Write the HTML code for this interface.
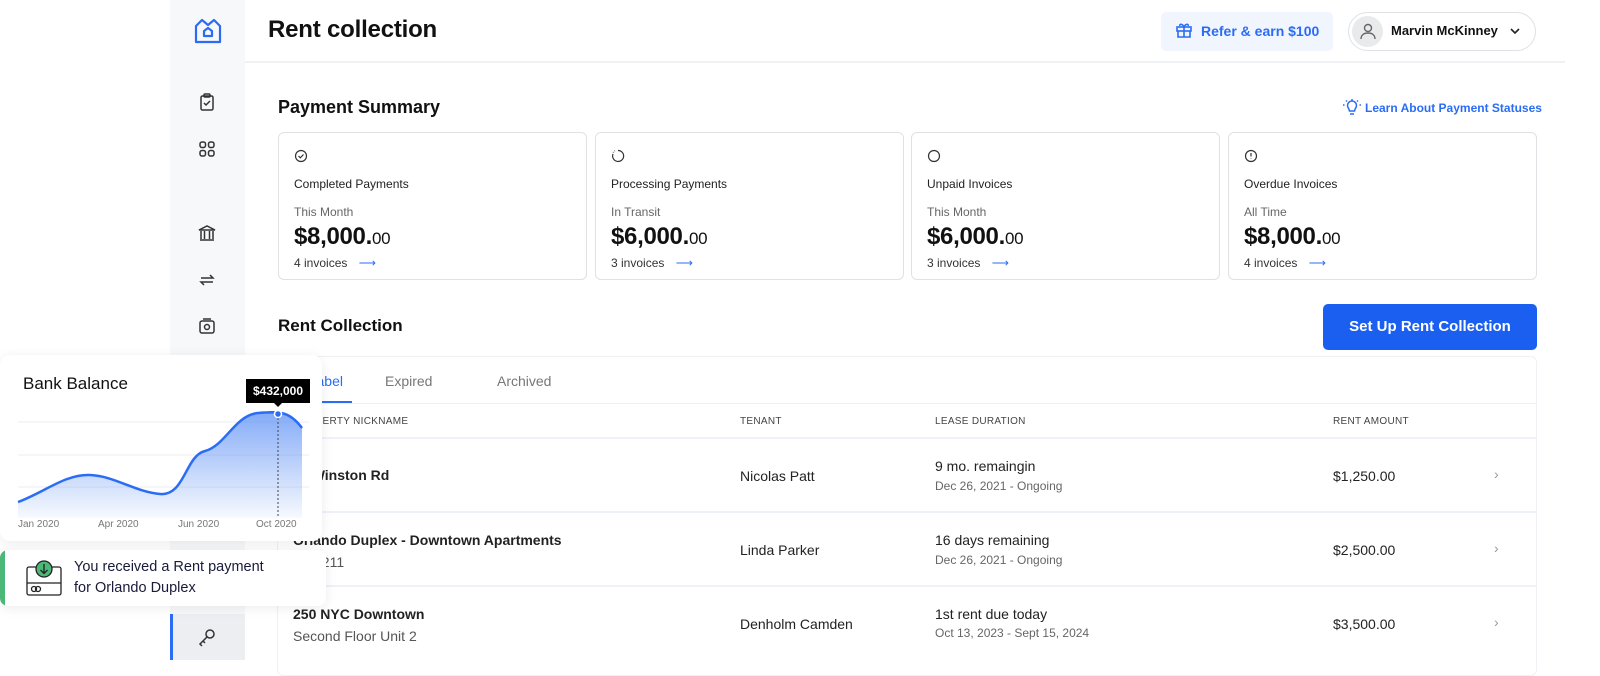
<!DOCTYPE html>
<html><head><meta charset="utf-8"><style>
*{box-sizing:border-box;margin:0;padding:0}
body{width:1600px;height:660px;overflow:hidden;background:#fff;font-family:"Liberation Sans",sans-serif;color:#111;position:relative}
.abs{position:absolute}
.side{left:170px;top:0;width:75px;height:660px;background:#f7f8fa}
.ic{position:absolute;left:197px}
.card{position:absolute;top:132px;width:309px;height:148px;border:1px solid #dfe1e5;border-radius:6px;padding:16px 15px}
.card .t{font-size:12px;color:#222;margin-top:9px}
.card .s{font-size:12px;color:#666;margin-top:14px}
.card .a{font-size:24px;font-weight:bold;margin-top:4px;letter-spacing:-0.3px}
.card .a small{font-size:17px;font-weight:normal}
.card .i{font-size:12px;color:#333;margin-top:5px}
.card .i b{color:#2a6df4;font-weight:normal;margin-left:8px}
.th{position:absolute;top:416px;font-size:10px;color:#444;letter-spacing:.3px}
.row{position:absolute;left:277px;width:1260px;height:74px;border-top:2px solid #eef1f8}
.c{position:absolute;font-size:14px;color:#222}
.sub{position:absolute;font-size:12px;color:#666}
</style></head><body>
<div class="abs side"></div>
<svg class="abs" style="left:194px;top:18px" width="28" height="26" viewBox="0 0 28 26" fill="none" stroke="#2a6df4" stroke-width="2.2" stroke-linejoin="round"><path d="M2 24V8l6-6 6 5 6-5 6 6v16z"/><path d="M10 18v-5l4-3 4 3v5z"/></svg>
<svg class="ic" style="top:92px" width="20" height="20" viewBox="0 0 20 20" fill="none" stroke="#333" stroke-width="1.5"><rect x="4" y="4" width="12" height="14" rx="1.5"/><rect x="7" y="2" width="6" height="3" rx="1"/><path d="M7 11l2 2 4-4"/></svg>
<svg class="ic" style="top:139px" width="20" height="20" viewBox="0 0 20 20" fill="none" stroke="#333" stroke-width="1.5"><rect x="3" y="3" width="5.5" height="5.5" rx="2"/><rect x="11.5" y="3" width="5.5" height="5.5" rx="2"/><rect x="3" y="11.5" width="5.5" height="5.5" rx="2"/><rect x="11.5" y="11.5" width="5.5" height="5.5" rx="2"/></svg>
<svg class="ic" style="top:223px" width="20" height="20" viewBox="0 0 20 20" fill="none" stroke="#333" stroke-width="1.5"><path d="M2 7l8-4 8 4zM3 17h14M4 8v8M7.5 8v8M12.5 8v8M16 8v8"/></svg>
<svg class="ic" style="top:270px" width="20" height="20" viewBox="0 0 20 20" fill="none" stroke="#333" stroke-width="1.5"><path d="M4 8h12l-3-3M16 12H4l3 3"/></svg>
<svg class="ic" style="top:316px" width="20" height="20" viewBox="0 0 20 20" fill="none" stroke="#333" stroke-width="1.5"><rect x="3" y="5" width="14" height="12" rx="2"/><path d="M6 3h8"/><circle cx="10" cy="11" r="2.5"/></svg>
<div class="abs" style="left:170px;top:614px;width:75px;height:46px;background:#eceef2"></div>
<div class="abs" style="left:170px;top:614px;width:3px;height:46px;background:#2a6df4"></div>
<svg class="ic" style="top:627px" width="20" height="20" viewBox="0 0 20 20" fill="none" stroke="#333" stroke-width="1.5"><circle cx="13" cy="7" r="4"/><path d="M10 10l-7 7 2 2M6 14l2 2"/></svg>

<div class="abs" style="left:268px;top:16px;font-size:24px;font-weight:bold;color:#111;letter-spacing:-0.2px">Rent collection</div>
<div class="abs" style="left:245px;top:61px;width:1320px;height:2px;background:#f0f1f3"></div>
<div class="abs" style="left:1161px;top:12px;width:172px;height:39px;background:#f1f5fd;border-radius:5px;color:#2a6df4;font-size:14px;font-weight:bold;line-height:39px;padding-left:40px">Refer &amp; earn $100</div>
<svg class="abs" style="left:1175px;top:21px" width="18" height="18" viewBox="0 0 18 18" fill="none" stroke="#2a6df4" stroke-width="1.6"><rect x="2" y="6" width="14" height="4"/><path d="M3 10v6h12v-6M9 6v10M9 6C7 2 4 3 5 5M9 6c2-4 5-3 4-1"/></svg>
<div class="abs" style="left:1348px;top:12px;width:188px;height:39px;border:1px solid #dfe1e5;border-radius:20px"></div>
<div class="abs" style="left:1352px;top:16px;width:31px;height:31px;border-radius:50%;background:#e9eaec"></div>
<svg class="abs" style="left:1358px;top:21px" width="20" height="20" viewBox="0 0 20 20" fill="none" stroke="#666" stroke-width="1.4"><circle cx="10" cy="7" r="3.5"/><path d="M3 18c0-4 3-6 7-6s7 2 7 6"/></svg>
<div class="abs" style="left:1391px;top:23px;font-size:13px;font-weight:bold;color:#111">Marvin McKinney</div>
<svg class="abs" style="left:1509px;top:27px" width="12" height="8" viewBox="0 0 12 8" fill="none" stroke="#222" stroke-width="1.6"><path d="M2 2l4 4 4-4"/></svg>

<div class="abs" style="left:278px;top:97px;font-size:18px;font-weight:bold">Payment Summary</div>
<svg class="abs" style="left:1343px;top:99px" width="18" height="18" viewBox="0 0 18 18" fill="none" stroke="#2a6df4" stroke-width="1.5"><path d="M6.5 12c0-2-2-3-2-5.5a4.5 4.5 0 019 0c0 2.5-2 3.5-2 5.5zM7 15h4M9 0v1.5M1.5 6H0M18 6h-1.5M3 1.5l1 1M15 1.5l-1 1"/></svg>
<div class="abs" style="left:1365px;top:101px;font-size:12px;font-weight:bold;color:#2a6df4">Learn About Payment Statuses</div>

<div class="card" style="left:278px"><svg width="14" height="14" viewBox="0 0 14 14" fill="none" stroke="#333" stroke-width="1.2"><circle cx="7" cy="7" r="5.5"/><path d="M4.5 7l1.8 1.8 3.2-3.3"/></svg><div class="t">Completed Payments</div><div class="s">This Month</div><div class="a">$8,000.<small>00</small></div><div class="i">4 invoices <b>⟶</b></div></div>
<div class="card" style="left:595px"><svg width="14" height="14" viewBox="0 0 14 14" fill="none" stroke="#333" stroke-width="1.2"><path d="M7 1.5a5.5 5.5 0 11-5 3.5" /><path d="M2 3.5l.5-.5M3.5 2l.5-.3" stroke-dasharray="1 1"/></svg><div class="t">Processing Payments</div><div class="s">In Transit</div><div class="a">$6,000.<small>00</small></div><div class="i">3 invoices <b>⟶</b></div></div>
<div class="card" style="left:911px"><svg width="14" height="14" viewBox="0 0 14 14" fill="none" stroke="#333" stroke-width="1.2"><circle cx="7" cy="7" r="5.5"/></svg><div class="t">Unpaid Invoices</div><div class="s">This Month</div><div class="a">$6,000.<small>00</small></div><div class="i">3 invoices <b>⟶</b></div></div>
<div class="card" style="left:1228px"><svg width="14" height="14" viewBox="0 0 14 14" fill="none" stroke="#333" stroke-width="1.2"><circle cx="7" cy="7" r="5.5"/><path d="M7 4v3.5M7 9.5v.5"/></svg><div class="t">Overdue Invoices</div><div class="s">All Time</div><div class="a">$8,000.<small>00</small></div><div class="i">4 invoices <b>⟶</b></div></div>

<div class="abs" style="left:278px;top:316px;font-size:17px;font-weight:bold">Rent Collection</div>
<div class="abs" style="left:1323px;top:304px;width:214px;height:46px;background:#1b5ff0;border-radius:5px;color:#fff;font-size:15px;font-weight:bold;text-align:center;line-height:46px">Set Up Rent Collection</div>

<div class="abs" style="left:277px;top:356px;width:1260px;height:320px;border:1px solid #f0f1f4;border-radius:6px"></div>
<div class="abs" style="left:243px;top:373px;width:100px;text-align:right;font-size:14px;color:#2a6df4">Active Label</div>
<div class="abs" style="left:280px;top:401px;width:72px;height:2px;background:#2a6df4"></div>
<div class="abs" style="left:385px;top:373px;font-size:14px;color:#777">Expired</div>
<div class="abs" style="left:497px;top:373px;font-size:14px;color:#777">Archived</div>
<div class="abs" style="left:277px;top:403px;width:1260px;height:1px;background:#edf0f7"></div>
<div class="th" style="left:293px">PROPERTY NICKNAME</div>
<div class="th" style="left:740px">TENANT</div>
<div class="th" style="left:935px">LEASE DURATION</div>
<div class="th" style="left:1333px">RENT AMOUNT</div>

<div class="row" style="top:437px"></div>
<div class="c" style="left:293px;top:467px;font-weight:bold">11 Winston Rd</div>
<div class="c" style="left:740px;top:468px">Nicolas Patt</div>
<div class="c" style="left:935px;top:458px">9 mo. remaingin</div><div class="sub" style="left:935px;top:479px">Dec 26, 2021 - Ongoing</div>
<div class="c" style="left:1333px;top:468px">$1,250.00</div><div class="sub" style="left:1494px;top:466px;font-size:14px;color:#999">›</div>

<div class="row" style="top:511px"></div>
<div class="c" style="left:293px;top:532px;font-weight:bold">Orlando Duplex - Downtown Apartments</div><div class="c" style="left:293px;top:554px;color:#555">Unit 211</div>
<div class="c" style="left:740px;top:542px">Linda Parker</div>
<div class="c" style="left:935px;top:532px">16 days remaining</div><div class="sub" style="left:935px;top:553px">Dec 26, 2021 - Ongoing</div>
<div class="c" style="left:1333px;top:542px">$2,500.00</div><div class="sub" style="left:1494px;top:540px;font-size:14px;color:#999">›</div>

<div class="row" style="top:585px"></div>
<div class="c" style="left:293px;top:606px;font-weight:bold">250 NYC Downtown</div><div class="c" style="left:293px;top:628px;color:#555">Second Floor Unit 2</div>
<div class="c" style="left:740px;top:616px">Denholm Camden</div>
<div class="c" style="left:935px;top:606px">1st rent due today</div><div class="sub" style="left:935px;top:626px">Oct 13, 2023 - Sept 15, 2024</div>
<div class="c" style="left:1333px;top:616px">$3,500.00</div><div class="sub" style="left:1494px;top:614px;font-size:14px;color:#999">›</div>

<div class="abs" style="left:0;top:355px;width:322px;height:186px;background:#fff;border-radius:10px;box-shadow:0 2px 12px rgba(0,0,0,.08)"></div>
<div class="abs" style="left:23px;top:374px;font-size:17px;color:#111">Bank Balance</div>
<svg class="abs" style="left:0;top:355px" width="322" height="186" viewBox="0 355 322 186">
<defs><linearGradient id="g" x1="0" y1="0" x2="0" y2="1"><stop offset="0" stop-color="#5b8ff5" stop-opacity=".75"/><stop offset="1" stop-color="#5b8ff5" stop-opacity=".05"/></linearGradient></defs>
<path d="M18 422H309M18 455H309M18 487H309" stroke="#eceef2"/>
<path d="M18 502C45 492 65 474 90 475S135 492 160 494S185 456 205 451S235 415 258 413S290 412 302 428V518H18Z" fill="url(#g)"/>
<path d="M18 502C45 492 65 474 90 475S135 492 160 494S185 456 205 451S235 415 258 413S290 412 302 428" fill="none" stroke="#2a6df4" stroke-width="2.5"/>
<path d="M278 414V518" stroke="#444" stroke-dasharray="2 2"/>
<circle cx="278" cy="414" r="3.5" fill="#2a6df4" stroke="#fff" stroke-width="1.5"/>
<rect x="246" y="379" width="64" height="24" fill="#000"/><path d="M274 403l4 4 4-4z" fill="#000"/>
<text x="278" y="395" font-size="12" fill="#fff" text-anchor="middle" font-family="Liberation Sans" font-weight="bold">$432,000</text>
<g font-size="10" fill="#777" font-family="Liberation Sans"><text x="18" y="527">Jan 2020</text><text x="98" y="527">Apr 2020</text><text x="178" y="527">Jun 2020</text><text x="256" y="527">Oct 2020</text></g>
</svg>

<div class="abs" style="left:0;top:550px;width:326px;height:56px;background:#fff;border-radius:8px;box-shadow:0 2px 12px rgba(0,0,0,.08);overflow:hidden"><div style="width:5px;height:56px;background:#4cb877"></div></div>
<svg class="abs" style="left:24px;top:557px" width="42" height="42" viewBox="0 0 42 42" fill="none" stroke="#222" stroke-width="1.3"><rect x="3" y="10" width="34" height="28" rx="2"/><path d="M3 26h34"/><circle cx="10" cy="32" r="2.5"/><circle cx="14" cy="32" r="2.5"/><circle cx="20" cy="12" r="8" fill="#4cb877"/><path d="M20 7v9M16.5 13l3.5 3.5 3.5-3.5"/></svg>
<div class="abs" style="left:74px;top:557px;font-size:14.5px;color:#1a1a3a;line-height:21px">You received a Rent payment<br>for Orlando Duplex</div>
</body></html>
